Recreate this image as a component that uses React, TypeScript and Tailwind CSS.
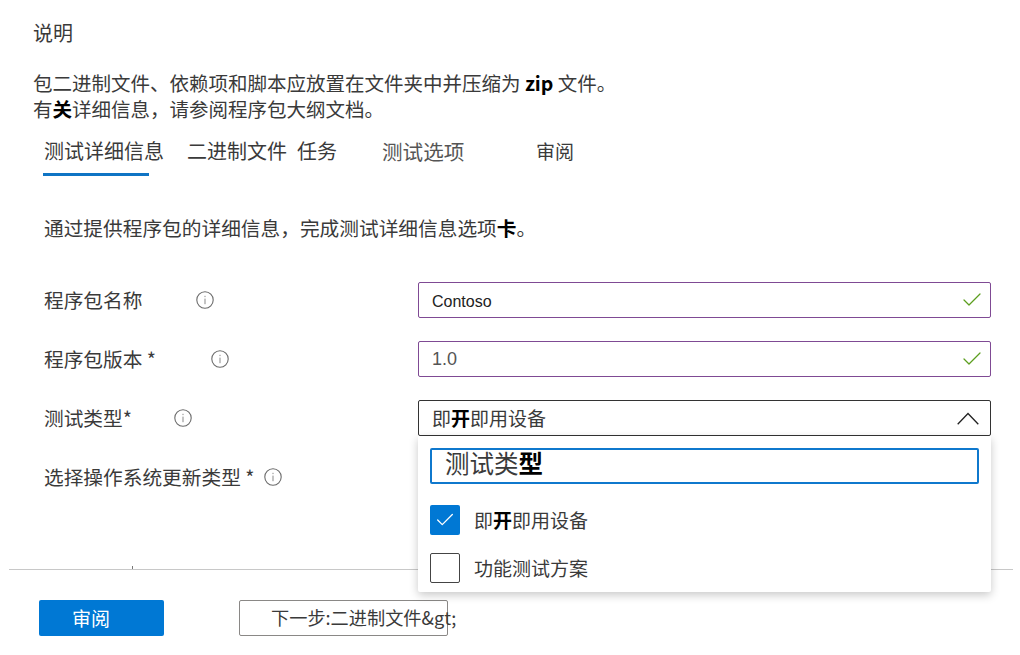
import { Check } from "lucide-react";

function InfoIcon({ className = "" }: { className?: string }) {
  return (
    <svg width="18" height="18" viewBox="0 0 18 18" fill="none" className={className}>
      <circle cx="9" cy="9" r="8.2" stroke="#6b6b6b" strokeWidth="1.1" />
      <rect x="8.5" y="7.6" width="1" height="5.6" fill="#8a8a8a" />
      <rect x="8.5" y="4.8" width="1" height="1.3" fill="#8a8a8a" />
    </svg>
  );
}

function FieldRow({ label, iconGap, children }: { label: string; iconGap: string; children?: React.ReactNode }) {
  return (
    <div className="flex h-9 items-center">
      <div className="flex w-[374px] items-center">
        <span className="whitespace-nowrap">{label}</span>
        <InfoIcon className={iconGap} />
      </div>
      {children}
    </div>
  );
}

function ValidInput({ value, muted }: { value: string; muted?: boolean }) {
  return (
    <div className="flex h-9 w-[573px] items-center justify-between rounded-[2px] border border-[#7f4a94] pl-[13px] pr-[6px]">
      <span className={muted ? "text-[18px] text-[#555]" : "pt-[3px] text-[16px] text-[#222]"} style={{ fontFamily: "'Liberation Sans', sans-serif" }}>
        {value}
      </span>
      <Check size={24} strokeWidth={1.25} className="text-[#5c9e1f]" />
    </div>
  );
}

export default function App() {
  return (
    <div
      className="relative h-[655px] w-[1020px] overflow-hidden bg-white pt-[21px] text-[20px] text-[#3a3a3a]"
      style={{ fontFamily: "'Noto Sans CJK SC', 'Liberation Sans', sans-serif" }}
    >
      <div className="ml-[33px] h-6 leading-6">说明</div>

      <div className="ml-[33px] mt-[25px] text-[19.5px] leading-[26px]">
        <div className="whitespace-nowrap">
          包二进制文件、依赖项和脚本应放置在文件夹中并压缩为 <b className="font-bold text-black">zip</b> 文件。
        </div>
        <div>
          有<b className="font-bold text-black">关</b>详细信息，请参阅程序包大纲文档。
        </div>
      </div>

      <div className="ml-[44px] mt-[3px] flex h-[50px] items-start pt-[13px] leading-[26px]">
        <div className="relative w-[143px] whitespace-nowrap">
          测试详细信息
          <div className="absolute left-[-1px] top-[35px] h-[3px] w-[106px] bg-[#0f74c4]" />
        </div>
        <div className="w-[110px] whitespace-nowrap">二进制文件</div>
        <div className="w-[85px] whitespace-nowrap">任务</div>
        <div className="w-[154px] whitespace-nowrap text-[20.6px] text-[#555]">测试选项</div>
        <div className="whitespace-nowrap text-[19px]">审阅</div>
      </div>

      <div className="ml-[44px] mt-[39px] h-7 whitespace-nowrap text-[19.7px] leading-7">
        通过提供程序包的详细信息，完成测试详细信息选项<b className="font-bold text-black">卡</b>。
      </div>

      <div className="ml-[44px] mt-[40px] flex flex-col gap-[23px] text-[19.7px]">
        <FieldRow label="程序包名称" iconGap="ml-[54px]">
          <ValidInput value="Contoso" />
        </FieldRow>
        <FieldRow label="程序包版本 *" iconGap="ml-[55px]">
          <ValidInput value="1.0" muted />
        </FieldRow>
        <FieldRow label="测试类型*" iconGap="ml-[42px]">
          <div className="flex h-9 w-[573px] items-center justify-between rounded-[2px] border border-[#333] pl-[13px] pr-[11px] text-[19px]">
            <span>
              即<b className="font-bold text-black">开</b>即用设备
            </span>
            <svg width="22" height="13" viewBox="0 0 22 13" fill="none">
              <path d="M0.7 12.3 L11 1.5 L21.3 12.3" stroke="#222" strokeWidth="1.3" />
            </svg>
          </div>
        </FieldRow>
        <FieldRow label="选择操作系统更新类型 *" iconGap="ml-[10px]" />
      </div>

      <div className="relative ml-[9px] mt-[74px] h-px w-[1004px] bg-[#c8c8c8]">
        <div className="absolute left-[123px] top-[-3px] h-[3px] w-px bg-[#777]" />
      </div>

      <div className="ml-[39px] mt-[30px] flex items-start text-[19px]">
        <div className="flex h-9 w-[125px] items-center rounded-[2px] bg-[#0078d4] pl-[33px] text-white">审阅</div>
        <div className="ml-[75px] flex h-9 w-[209px] items-center whitespace-nowrap rounded-[2px] border border-[#8a8886] pl-[31px] text-[18.2px]">
          下一步:二进制文件{"&gt;"}
        </div>
      </div>

      {/* dropdown overlay */}
      <div className="absolute left-[418px] top-[436px] w-[573px] rounded-b-[2px] bg-white px-3 pb-[9px] pt-3 text-[19px] shadow-[0_3px_10px_rgba(0,0,0,0.22)]">
        <div className="h-9 rounded-[2px] border-2 border-[#0f78cd] pl-[13px] text-[24.5px] leading-[26px]">
          测试类<b className="font-bold text-black">型</b>
        </div>
        <div className="mt-[21px] flex h-[30px] items-center">
          <div className="flex h-[30px] w-[30px] items-center justify-center rounded-[2px] bg-[#0078d4]">
            <Check size={22} strokeWidth={1.4} className="text-white" />
          </div>
          <span className="ml-[14px]">
            即<b className="font-bold text-black">开</b>即用设备
          </span>
        </div>
        <div className="mt-[18px] flex h-[30px] items-center">
          <div className="h-[30px] w-[30px] rounded-[2px] border border-[#444]" />
          <span className="ml-[14px]">功能测试方案</span>
        </div>
      </div>
    </div>
  );
}
